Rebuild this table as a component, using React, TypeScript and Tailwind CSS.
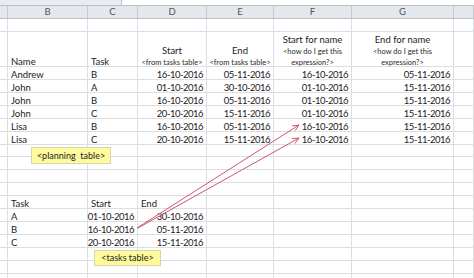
import React from 'react';

type Align = 'l' | 'r' | 'c';
type Cell = { t: string; a: Align; d?: boolean } | null;

const COLS = ['w-[8px]', 'w-[80px]', 'w-[50px]', 'w-[69px]', 'w-[67px]', 'w-[78px]', 'w-[102px]', 'w-[20px]'];
const LETTERS = ['', 'B', 'C', 'D', 'E', 'F', 'G', ''];

const L = (t: string): Cell => ({ t, a: 'l' });
const R = (t: string): Cell => ({ t, a: 'r', d: true });

const planning: Cell[][] = [
  [L('Andrew'), L('B'), R('16-10-2016'), R('05-11-2016'), R('16-10-2016'), R('05-11-2016')],
  [L('John'), L('A'), R('01-10-2016'), R('30-10-2016'), R('01-10-2016'), R('15-11-2016')],
  [L('John'), L('B'), R('16-10-2016'), R('05-11-2016'), R('01-10-2016'), R('15-11-2016')],
  [L('John'), L('C'), R('20-10-2016'), R('15-11-2016'), R('01-10-2016'), R('15-11-2016')],
  [L('Lisa'), L('B'), R('16-10-2016'), R('05-11-2016'), R('16-10-2016'), R('15-11-2016')],
  [L('Lisa'), L('C'), R('20-10-2016'), R('15-11-2016'), R('16-10-2016'), R('15-11-2016')],
];

const tasks: Cell[][] = [
  [L('Task'), L('Start'), L('End')],
  [L('A'), R('01-10-2016'), R('30-10-2016')],
  [L('B'), R('16-10-2016'), R('05-11-2016')],
  [L('C'), R('20-10-2016'), R('15-11-2016')],
];

const font = { fontFamily: 'Lato, "Open Sans", sans-serif' };

function Row({ h, cells }: { h: string; cells: Cell[] }) {
  return (
    <div className={`flex ${h}`}>
      {COLS.map((w, i) => {
        const c = i === 0 ? null : cells[i - 1] ?? null;
        const just = c?.a === 'r' ? 'justify-end' : c?.a === 'c' ? 'justify-center' : 'justify-start';
        return (
          <div
            key={i}
            className={`${w} shrink-0 flex items-end ${just} px-[3px] border-r border-b border-[#dcdee1] text-[9.5px] leading-[8px] text-[#1c1c1c] whitespace-nowrap ${c?.d ? 'tracking-[-0.5px]' : ''}`}
          >
            {c?.t}
          </div>
        );
      })}
    </div>
  );
}

function Heading({ big, small }: { big: string[]; small: string[] }) {
  return (
    <div className="flex flex-col items-center -mb-[2px]">
      {big.map((b, i) => (
        <span key={'b' + i} className="text-[9.5px] leading-[12px] text-[#1c1c1c]">
          {b}
        </span>
      ))}
      {small.map((s, i) => (
        <span key={'s' + i} className="text-[7.5px] leading-[11px] text-[#2a2a2a]">
          {s}
        </span>
      ))}
    </div>
  );
}

function TitleRow() {
  const content: React.ReactNode[] = [
    null,
    <span className="text-[9.5px] leading-[8px] text-[#1c1c1c] px-[3px]">Name</span>,
    <span className="text-[9.5px] leading-[8px] text-[#1c1c1c] px-[3px]">Task</span>,
    <Heading big={['Start']} small={['<from tasks table>']} />,
    <Heading big={['End']} small={['<from tasks table>']} />,
    <Heading big={['Start for name']} small={['<how do I get this', 'expression?>']} />,
    <Heading big={['End for name']} small={['<how do I get this', 'expression?>']} />,
    null,
  ];
  return (
    <div className="flex h-[35px]">
      {COLS.map((w, i) => (
        <div
          key={i}
          className={`${w} shrink-0 flex items-end ${i >= 3 && i <= 6 ? 'justify-center' : 'justify-start'} border-r border-b border-[#dcdee1] whitespace-nowrap`}
        >
          {content[i]}
        </div>
      ))}
    </div>
  );
}

function head(x1: number, y1: number, x2: number, y2: number, len = 7, spread = 0.42) {
  const a = Math.atan2(y2 - y1, x2 - x1);
  const p1 = [x2 - len * Math.cos(a - spread), y2 - len * Math.sin(a - spread)];
  const p2 = [x2 - len * Math.cos(a + spread), y2 - len * Math.sin(a + spread)];
  return `M${p1[0]} ${p1[1]} L${x2} ${y2} L${p2[0]} ${p2[1]}`;
}

function Arrows() {
  const lines = [
    [137, 228, 299, 125],
    [138, 228, 299, 138],
  ];
  return (
    <svg className="absolute left-0 top-0 pointer-events-none" width={474} height={278}>
      {lines.map(([x1, y1, x2, y2], i) => (
        <g key={i} stroke="#c95a72" strokeWidth={1} fill="none">
          <line x1={x1} y1={y1} x2={x2} y2={y2} />
          <path d={head(x1, y1, x2, y2)} />
        </g>
      ))}
    </svg>
  );
}

function Note({ cls, text }: { cls: string; text: string }) {
  return (
    <div
      className={`absolute ${cls} flex items-center justify-center bg-[#fdfb9d] border border-[#d8d6a8] text-[9px] text-[#1c1c1c] whitespace-pre`}
    >
      {text}
    </div>
  );
}

export default function App() {
  const blank: Cell[] = [];
  return (
    <div className="relative w-[474px] h-[278px] overflow-hidden bg-white" style={font}>
      {/* formula bar edge */}
      <div className="flex h-[6px] border-b border-[#b8bfc9]">
        <div className="w-[122px] bg-[#e9ecf0] border-r border-[#c3c8d0]" />
        <div className="flex-1 bg-white" />
      </div>
      {/* column letters */}
      <div className="flex h-[13px] bg-[#e4e8ed] border-b border-[#b9c0ca]">
        {COLS.map((w, i) => (
          <div
            key={i}
            className={`${w} shrink-0 flex items-center justify-center border-r border-[#c4cad3] text-[9.5px] leading-none text-[#4d5562]`}
          >
            {LETTERS[i]}
          </div>
        ))}
      </div>
      <Row h="h-[13px]" cells={blank} />
      <TitleRow />
      {planning.map((r, i) => (
        <Row key={'p' + i} h="h-[13px]" cells={r} />
      ))}
      <Row h="h-[12px]" cells={blank} />
      <Row h="h-[13px]" cells={blank} />
      <Row h="h-[13px]" cells={blank} />
      <Row h="h-[13px]" cells={blank} />
      {tasks.map((r, i) => (
        <Row key={'t' + i} h="h-[13px]" cells={r} />
      ))}
      <Row h="h-[13px]" cells={blank} />
      <Row h="h-[13px]" cells={blank} />
      <Row h="h-[13px]" cells={blank} />

      <Note cls="left-[31px] top-[147px] w-[80px] h-[17px]" text="<planning  table>" />
      <Note cls="left-[94px] top-[250px] w-[67px] h-[16px]" text="<tasks table>" />
      <Arrows />
    </div>
  );
}
